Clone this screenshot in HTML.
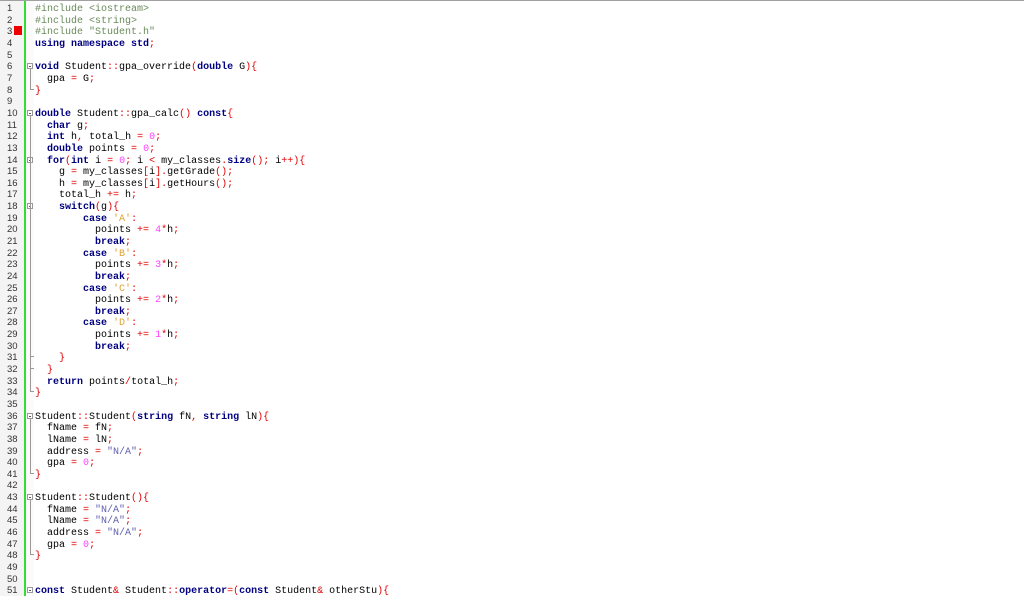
<!DOCTYPE html>
<html><head><meta charset="utf-8"><style>
html,body{margin:0;padding:0;background:#fff;width:1024px;height:596px;overflow:hidden;position:relative}
#top{position:absolute;left:0;top:0;width:1024px;height:1px;background:#a0a0a0}
#gut{position:absolute;left:0;top:1px;width:24px;height:595px;background:#f4f4f4}
#green{position:absolute;left:24px;top:1px;width:2px;height:595px;background:#33dd33}
#fold{position:absolute;left:26px;top:1px;width:8px;height:595px;background:#fbfbfb}
.l{position:absolute;left:0;height:11.64px;line-height:11.64px;font-family:"Liberation Mono",monospace;font-size:10px;white-space:pre;color:#000}
.n{position:absolute;top:1px;left:7px;line-height:11.64px;color:#333;font-family:"Liberation Sans",sans-serif;font-size:9.5px}
.c{position:absolute;top:2px;left:35px;line-height:11.64px}
.k{color:#000080;font-weight:bold}
.o{color:#e00000}
.p{color:#6a8a5a}
.s{color:#6060b0}
.ch{color:#e0a030}
.nu{color:#ff40ff}
.box{position:absolute;left:27px;width:6px;height:6px;border:1px solid #999;background:#fff;box-sizing:border-box}
.box:after{content:"";position:absolute;left:1px;top:2px;width:2px;height:1px;background:#555}
.vl{position:absolute;left:30px;width:1px;background:#999}
.end{position:absolute;left:30px;width:4px;height:5px;border-left:1px solid #999;border-bottom:1px solid #999;box-sizing:border-box}
#mark{position:absolute;left:14px;top:26px;width:8px;height:9px;background:#ee0000}
</style></head><body>
<div id="top"></div><div id="gut"></div><div id="green"></div><div id="fold"></div><div id="mark"></div>
<div id="code"></div>
<script>
var L=[
'<span class="p">#include &lt;iostream&gt;</span>',
'<span class="p">#include &lt;string&gt;</span>',
'<span class="p">#include "Student.h"</span>',
'<span class="k">using namespace std</span><span class="o">;</span>',
'',
'<span class="k">void</span> Student<span class="o">::</span>gpa_override<span class="o">(</span><span class="k">double</span> G<span class="o">){</span>',
'  gpa <span class="o">=</span> G<span class="o">;</span>',
'<span class="o">}</span>',
'',
'<span class="k">double</span> Student<span class="o">::</span>gpa_calc<span class="o">()</span> <span class="k">const</span><span class="o">{</span>',
'  <span class="k">char</span> g<span class="o">;</span>',
'  <span class="k">int</span> h<span class="o">,</span> total_h <span class="o">=</span> <span class="nu">0</span><span class="o">;</span>',
'  <span class="k">double</span> points <span class="o">=</span> <span class="nu">0</span><span class="o">;</span>',
'  <span class="k">for</span><span class="o">(</span><span class="k">int</span> i <span class="o">=</span> <span class="nu">0</span><span class="o">;</span> i <span class="o">&lt;</span> my_classes<span class="o">.</span><span class="k">size</span><span class="o">();</span> i<span class="o">++){</span>',
'    g <span class="o">=</span> my_classes<span class="o">[</span>i<span class="o">].</span>getGrade<span class="o">();</span>',
'    h <span class="o">=</span> my_classes<span class="o">[</span>i<span class="o">].</span>getHours<span class="o">();</span>',
'    total_h <span class="o">+=</span> h<span class="o">;</span>',
'    <span class="k">switch</span><span class="o">(</span>g<span class="o">){</span>',
'        <span class="k">case</span> <span class="ch">\'A\'</span><span class="o">:</span>',
'          points <span class="o">+=</span> <span class="nu">4</span><span class="o">*</span>h<span class="o">;</span>',
'          <span class="k">break</span><span class="o">;</span>',
'        <span class="k">case</span> <span class="ch">\'B\'</span><span class="o">:</span>',
'          points <span class="o">+=</span> <span class="nu">3</span><span class="o">*</span>h<span class="o">;</span>',
'          <span class="k">break</span><span class="o">;</span>',
'        <span class="k">case</span> <span class="ch">\'C\'</span><span class="o">:</span>',
'          points <span class="o">+=</span> <span class="nu">2</span><span class="o">*</span>h<span class="o">;</span>',
'          <span class="k">break</span><span class="o">;</span>',
'        <span class="k">case</span> <span class="ch">\'D\'</span><span class="o">:</span>',
'          points <span class="o">+=</span> <span class="nu">1</span><span class="o">*</span>h<span class="o">;</span>',
'          <span class="k">break</span><span class="o">;</span>',
'    <span class="o">}</span>',
'  <span class="o">}</span>',
'  <span class="k">return</span> points<span class="o">/</span>total_h<span class="o">;</span>',
'<span class="o">}</span>',
'',
'Student<span class="o">::</span>Student<span class="o">(</span><span class="k">string</span> fN<span class="o">,</span> <span class="k">string</span> lN<span class="o">){</span>',
'  fName <span class="o">=</span> fN<span class="o">;</span>',
'  lName <span class="o">=</span> lN<span class="o">;</span>',
'  address <span class="o">=</span> <span class="s">"N/A"</span><span class="o">;</span>',
'  gpa <span class="o">=</span> <span class="nu">0</span><span class="o">;</span>',
'<span class="o">}</span>',
'',
'Student<span class="o">::</span>Student<span class="o">(){</span>',
'  fName <span class="o">=</span> <span class="s">"N/A"</span><span class="o">;</span>',
'  lName <span class="o">=</span> <span class="s">"N/A"</span><span class="o">;</span>',
'  address <span class="o">=</span> <span class="s">"N/A"</span><span class="o">;</span>',
'  gpa <span class="o">=</span> <span class="nu">0</span><span class="o">;</span>',
'<span class="o">}</span>',
'',
'',
'<span class="k">const</span> Student<span class="o">&amp;</span> Student<span class="o">::</span><span class="k">operator</span><span class="o">=(</span><span class="k">const</span> Student<span class="o">&amp;</span> otherStu<span class="o">){</span>'
];
var H=11.64,T=2.2,h='';
function y(i){return T+(i-1)*H;}
for(var i=0;i<L.length;i++){
 h+='<div class="l" style="top:'+y(i+1).toFixed(2)+'px;width:1024px"><span class="n">'+(i+1)+'</span><span class="c">'+L[i]+'</span></div>';
}
var boxes=[6,10,14,18,36,43,51];
boxes.forEach(function(b){h+='<div class="box" style="top:'+(y(b)+3).toFixed(1)+'px"></div>';});
var ranges=[[6,8],[10,34],[36,41],[43,48]];
ranges.forEach(function(r){var t=y(r[0])+9,b=y(r[1])+5;h+='<div class="vl" style="top:'+t.toFixed(1)+'px;height:'+(b-t).toFixed(1)+'px"></div><div class="end" style="top:'+(y(r[1])+1).toFixed(1)+'px"></div>';});
[[31],[32]].forEach(function(r){h+='<div style="position:absolute;left:30px;top:'+(y(r[0])+5).toFixed(1)+'px;width:4px;height:1px;background:#999"></div>';});
document.getElementById('code').innerHTML=h;
</script>
</body></html>
